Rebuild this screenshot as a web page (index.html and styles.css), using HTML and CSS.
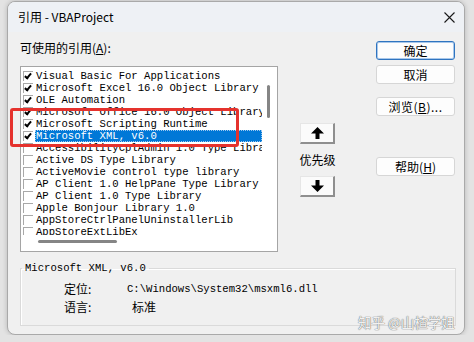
FILE: index.html
```html
<!DOCTYPE html>
<html lang="zh">
<head>
    <meta charset="UTF-8">
    <meta name="viewport" content="width=device-width, initial-scale=1.0">
    <title>引用 - VBAProject</title>
    <link rel="stylesheet" href="styles.css">
</head>
<body>
<div class="window">
    <div class="titlebar">
        <span class="title">引用 - VBAProject</span>
        <svg class="close" width="11" height="11" viewBox="0 0 11 11">
            <path d="M0.5 0.5 L10.5 10.5 M10.5 0.5 L0.5 10.5" stroke="#1a1a1a" stroke-width="1.1" fill="none"/>
        </svg>
    </div>
    <div class="content">
        <div class="main">
            <div class="left">
                <div class="caption">可使用的引用(<u>A</u>):</div>
                <div class="list">
                    <div class="list-body">
                        <div class="items">
                            <div class="row"><span class="box checked"></span><span class="name">Visual Basic For Applications</span></div>
                            <div class="row"><span class="box checked"></span><span class="name">Microsoft Excel 16.0 Object Library</span></div>
                            <div class="row"><span class="box checked"></span><span class="name">OLE Automation</span></div>
                            <div class="row"><span class="box checked"></span><span class="name">Microsoft Office 16.0 Object Library</span></div>
                            <div class="row"><span class="box checked"></span><span class="name">Microsoft Scripting Runtime</span></div>
                            <div class="row"><span class="box checked"></span><span class="name selected">Microsoft XML, v6.0</span></div>
                            <div class="row"><span class="box"></span><span class="name">AccessibilityCplAdmin 1.0 Type Library</span></div>
                            <div class="row"><span class="box"></span><span class="name">Active DS Type Library</span></div>
                            <div class="row"><span class="box"></span><span class="name">ActiveMovie control type library</span></div>
                            <div class="row"><span class="box"></span><span class="name">AP Client 1.0 HelpPane Type Library</span></div>
                            <div class="row"><span class="box"></span><span class="name">AP Client 1.0 Type Library</span></div>
                            <div class="row"><span class="box"></span><span class="name">Apple Bonjour Library 1.0</span></div>
                            <div class="row"><span class="box"></span><span class="name">AppStoreCtrlPanelUninstallerLib</span></div>
                            <div class="row"><span class="box"></span><span class="name">AppStoreExtLibEx</span></div>
                        </div>
                        <div class="vscroll"><div class="vthumb"></div></div>
                    </div>
                    <div class="hscroll"><div class="hthumb"></div></div>
                </div>
            </div>
            <div class="mid">
                <div class="arrow-btn">
                    <svg width="13" height="12" viewBox="0 0 13 12"><path d="M6.5 0 L13 6.5 L8.5 6.5 L8.5 12 L4.5 12 L4.5 6.5 L0 6.5 Z" fill="#000"/></svg>
                </div>
                <div class="priority">优先级</div>
                <div class="arrow-btn">
                    <svg width="13" height="12" viewBox="0 0 13 12"><path d="M6.5 12 L13 5.5 L8.5 5.5 L8.5 0 L4.5 0 L4.5 5.5 L0 5.5 Z" fill="#000"/></svg>
                </div>
            </div>
            <div class="right">
                <div class="btn default">确定</div>
                <div class="btn">取消</div>
                <div class="btn browse">浏览(<u>B</u>)...</div>
                <div class="btn help">帮助(<u>H</u>)</div>
            </div>
        </div>
        <fieldset class="info">
            <legend>Microsoft XML, v6.0</legend>
            <div class="info-row"><span class="key">定位:</span><span class="mono">C:\Windows\System32\msxml6.dll</span></div>
            <div class="info-row"><span class="key">语言:</span><span class="lang">标准</span></div>
        </fieldset>
    </div>
    <div class="highlight"></div>
    <div class="watermark">知乎 @山楂学姐</div>
</div>
</body>
</html>
```

FILE: styles.css
```css
body {
    margin: 0;
    padding: 0;
    background-color: #e3e3e3;
    font-family: "Noto Sans CJK SC", "Noto Sans", sans-serif;
    font-size: 12px;
    color: #000;
}
.window {
    position: relative;
    margin: 1px 0 0 7px;
    width: 456px;
    height: 332px;
    border: 1px solid #a9a9a9;
    border-radius: 8px;
    background-color: #f0f0f0;
    box-shadow: 0 0 5px rgba(0, 0, 0, 0.2);
    overflow: hidden;
}
.titlebar {
    height: 30px;
    display: flex;
    align-items: center;
    justify-content: space-between;
    padding: 0 9px 0 10px;
    background-color: #eef1f5;
}
.title {
    font-size: 12px;
    line-height: 16px;
}
.content {
    padding: 0 0 0 12px;
}
.main {
    display: flex;
    align-items: flex-start;
}
.left {
    width: 258px;
}
.caption {
    margin-top: 8px;
    line-height: 16px;
    height: 16px;
}
.list {
    margin-top: 10px;
    width: 256px;
    height: 184px;
    border: 1px solid #a5a5a5;
    background-color: #fff;
}
.list-body {
    display: flex;
    height: 168px;
}
.items {
    width: 241px;
    padding-top: 3px;
    overflow: hidden;
    font-family: "Liberation Mono", monospace;
    font-size: 10.6px;
}
.row {
    display: flex;
    align-items: center;
    height: 12px;
    line-height: 12px;
    white-space: nowrap;
}
.box {
    flex: none;
    width: 9px;
    height: 9px;
    margin-left: 2px;
    border-top: 1px solid #a8a8a8;
    border-left: 1px solid #a8a8a8;
    background-color: #fff;
    position: relative;
}
.box.checked::after {
    content: "";
    position: absolute;
    left: 2px;
    top: 0;
    width: 2px;
    height: 5px;
    border-right: 2px solid #000;
    border-bottom: 2px solid #000;
    transform: rotate(40deg);
}
.name {
    flex: 1;
    margin-left: 2px;
    padding-left: 1px;
    overflow: hidden;
}
.name.selected {
    background-color: #0078d7;
    color: #fff;
    outline: 1px dotted #9cc8f0;
    outline-offset: -1px;
}
.vscroll {
    width: 15px;
}
.vthumb {
    margin: 18px 0 0 5px;
    width: 3px;
    height: 33px;
    border-radius: 2px;
    background-color: #858585;
}
.hscroll {
    height: 16px;
}
.hthumb {
    margin: 5px 0 0 17px;
    width: 79px;
    height: 3px;
    border-radius: 2px;
    background-color: #858585;
}
.mid {
    width: 35px;
    margin: 91px 0 0 22px;
    display: flex;
    flex-direction: column;
    align-items: center;
}
.arrow-btn {
    width: 32px;
    height: 18px;
    display: flex;
    align-items: center;
    justify-content: center;
    background-color: #fbfbfb;
    border-top: 1px solid #e6e6e6;
    border-left: 1px solid #e6e6e6;
    border-right: 2px solid #8f8f8f;
    border-bottom: 2px solid #8f8f8f;
}
.priority {
    margin: 8px 0;
    line-height: 16px;
    width: 40px;
    text-align: center;
}
.right {
    margin: 9px 0 0 41px;
    width: 79px;
    display: flex;
    flex-direction: column;
}
.btn {
    height: 17px;
    line-height: 17px;
    text-align: center;
    background-color: #fdfdfd;
    border: 1px solid #d6d6d6;
    border-radius: 3px;
    margin-bottom: 5px;
}
.btn.default {
    border-color: #2f74c0;
    box-shadow: inset 0 0 0 1px #a9c8ea;
}
.btn.browse {
    margin-top: 8px;
    letter-spacing: 0.5px;
}
.btn.help {
    margin-top: 36px;
}
.info {
    margin: 10px 0 0 0;
    padding: 6px 0 9px 0;
    width: 434px;
    border: 1px solid #dadada;
    box-shadow: inset 1px 1px 0 #fff;
}
.info legend {
    margin-left: 1px;
    padding: 0 3px;
    line-height: 12px;
    font-family: "Liberation Mono", monospace;
    font-size: 10.6px;
}
.info-row {
    display: flex;
    height: 18px;
    line-height: 18px;
}
.key {
    width: 63px;
    margin-left: 43px;
}
.mono {
    font-family: "Liberation Mono", monospace;
    font-size: 10.6px;
}
.lang {
    margin-left: 5px;
}
.highlight {
    position: absolute;
    left: 2px;
    top: 106px;
    width: 223px;
    height: 33px;
    border: 3px solid #e5322d;
    border-radius: 3px;
}
.watermark {
    position: absolute;
    left: 350px;
    top: 310px;
    font-size: 13.5px;
    line-height: 20px;
    white-space: nowrap;
    color: rgba(255, 255, 255, 0.92);
    text-shadow: 0 0 1px #6e6e6e, 0 0 1px #6e6e6e;
}
```
